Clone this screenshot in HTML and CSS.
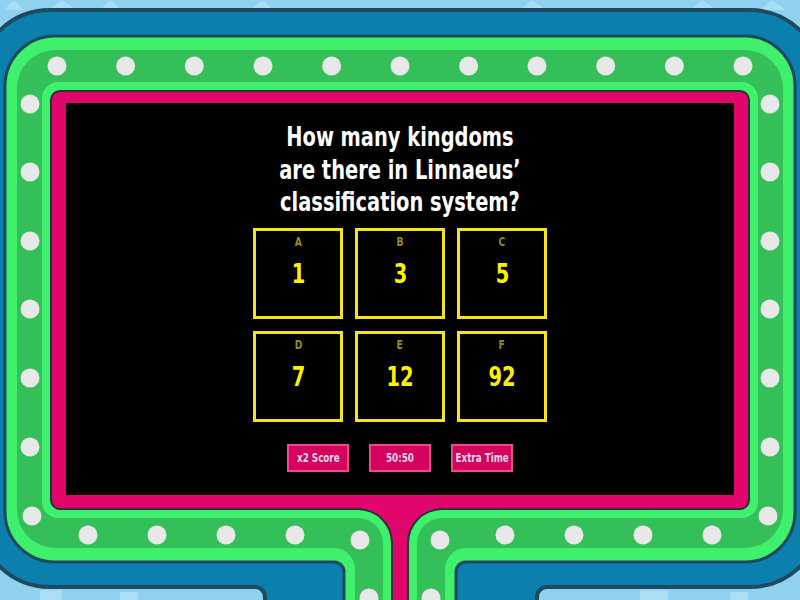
FILE: index.html
```html
<!DOCTYPE html>
<html lang="en">
<head>
<meta charset="utf-8">
<title>Gameshow Quiz</title>
<link rel="stylesheet" href="styles.css">
</head>
<body>
<div class="stage">
  <svg class="frame" width="800" height="600" viewBox="0 0 800 600" xmlns="http://www.w3.org/2000/svg" aria-hidden="true">
    <rect x="0" y="0" width="800" height="600" fill="#8fd1ef"/>
    <g fill="#a9def5">
      <polygon points="4,10 14,0 24,10"/>
      <polygon points="48,10 62,0 76,10"/>
      <polygon points="100,10 110,0 122,10"/>
      <polygon points="250,10 262,0 274,10"/>
      <polygon points="520,10 532,0 546,10"/>
      <polygon points="690,10 702,0 716,10"/>
      <polygon points="760,10 772,0 786,10"/>
      <rect x="40" y="590" width="22" height="10"/>
      <rect x="120" y="592" width="18" height="8"/>
      <rect x="640" y="590" width="28" height="10"/>
      <rect x="730" y="592" width="18" height="8"/>
    </g>
    <path d="M 50 10 H 750 A 72 72 0 0 1 822 82 V 515 A 72 72 0 0 1 750 587 H 547 A 10 10 0 0 0 537 597 V 620 H 265 V 597 A 10 10 0 0 0 255 587 H 50 A 72 72 0 0 1 -22 515 V 82 A 72 72 0 0 1 50 10 Z" fill="#0b7fae" stroke="#1d4a60" stroke-width="4"/>
    <path d="M 55 36 H 745 A 50 50 0 0 1 795 86 V 512 A 50 50 0 0 1 745 562 H 466 A 10 10 0 0 0 456 572 V 620 H 344 V 572 A 10 10 0 0 0 334 562 H 55 A 50 50 0 0 1 5 512 V 86 A 50 50 0 0 1 55 36 Z" fill="#3ef06b" stroke="#1d4a5a" stroke-width="3"/>
    <path d="M 55 50 H 745 A 38 38 0 0 1 783 88 V 510 A 38 38 0 0 1 745 548 H 466 A 21 21 0 0 0 445 569 V 620 H 355 V 569 A 21 21 0 0 0 334 548 H 55 A 38 38 0 0 1 17 510 V 88 A 38 38 0 0 1 55 50 Z" fill="#35bf58"/>
    <path d="M 58 82 H 742 A 16 16 0 0 1 758 98 V 502 A 16 16 0 0 1 742 518 H 442 A 25 25 0 0 0 417 543 V 620 H 383 V 543 A 25 25 0 0 0 358 518 H 58 A 16 16 0 0 1 42 502 V 98 A 16 16 0 0 1 58 82 Z" fill="#3ef06b"/>
    <path d="M 60 90 H 740 A 10 10 0 0 1 750 100 V 500 A 10 10 0 0 1 740 510 H 442 A 33 33 0 0 0 409 543 V 620 H 391 V 543 A 33 33 0 0 0 358 510 H 60 A 10 10 0 0 1 50 500 V 100 A 10 10 0 0 1 60 90 Z" fill="#27323c"/>
    <path d="M 60 92 H 740 A 8 8 0 0 1 748 100 V 500 A 8 8 0 0 1 740 508 H 442 A 35 35 0 0 0 407 543 V 620 H 393 V 543 A 35 35 0 0 0 358 508 H 60 A 8 8 0 0 1 52 500 V 100 A 8 8 0 0 1 60 92 Z" fill="#e0066b"/>
    <g fill="#e8e8e8">
      <circle cx="57" cy="66" r="9.5"/>
      <circle cx="125.6" cy="66" r="9.5"/>
      <circle cx="194.3" cy="66" r="9.5"/>
      <circle cx="263" cy="66" r="9.5"/>
      <circle cx="331.6" cy="66" r="9.5"/>
      <circle cx="400" cy="66" r="9.5"/>
      <circle cx="468.6" cy="66" r="9.5"/>
      <circle cx="537" cy="66" r="9.5"/>
      <circle cx="605.7" cy="66" r="9.5"/>
      <circle cx="674.4" cy="66" r="9.5"/>
      <circle cx="743" cy="66" r="9.5"/>
      <circle cx="30" cy="104" r="9.5"/>
      <circle cx="30" cy="172" r="9.5"/>
      <circle cx="30" cy="241" r="9.5"/>
      <circle cx="30" cy="309" r="9.5"/>
      <circle cx="30" cy="378" r="9.5"/>
      <circle cx="30" cy="447" r="9.5"/>
      <circle cx="32" cy="516" r="9.5"/>
      <circle cx="770" cy="104" r="9.5"/>
      <circle cx="770" cy="172" r="9.5"/>
      <circle cx="770" cy="241" r="9.5"/>
      <circle cx="770" cy="309" r="9.5"/>
      <circle cx="770" cy="378" r="9.5"/>
      <circle cx="770" cy="447" r="9.5"/>
      <circle cx="768" cy="516" r="9.5"/>
      <circle cx="88" cy="535" r="9.5"/>
      <circle cx="157" cy="535" r="9.5"/>
      <circle cx="226" cy="535" r="9.5"/>
      <circle cx="295" cy="535" r="9.5"/>
      <circle cx="360" cy="540" r="9.5"/>
      <circle cx="440" cy="540" r="9.5"/>
      <circle cx="505" cy="535" r="9.5"/>
      <circle cx="574" cy="535" r="9.5"/>
      <circle cx="643" cy="535" r="9.5"/>
      <circle cx="712" cy="535" r="9.5"/>
      <circle cx="369" cy="598" r="9.5"/>
      <circle cx="431" cy="598" r="9.5"/>
    </g>
  </svg>
  <div class="overlay">
    <main class="screen">
      <h1 class="question">How many kingdoms<br>are there in Linnaeus’<br>classification system?</h1>
      <div class="answers">
        <div class="answer"><span class="letter">A</span><span class="value">1</span></div>
        <div class="answer"><span class="letter">B</span><span class="value">3</span></div>
        <div class="answer"><span class="letter">C</span><span class="value">5</span></div>
        <div class="answer"><span class="letter">D</span><span class="value">7</span></div>
        <div class="answer"><span class="letter">E</span><span class="value">12</span></div>
        <div class="answer"><span class="letter">F</span><span class="value">92</span></div>
      </div>
      <div class="powerups">
        <button class="powerup" type="button"><span class="label">x2 Score</span></button>
        <button class="powerup" type="button"><span class="label">50:50</span></button>
        <button class="powerup" type="button"><span class="label">Extra Time</span></button>
      </div>
    </main>
  </div>
</div>
</body>
</html>
```
FILE: styles.css
```css
html, body {
  margin: 0;
  padding: 0;
}

body {
  width: 800px;
  height: 600px;
  overflow: hidden;
  background: #8fd1ef;
  font-family: "DejaVu Sans Condensed", "DejaVu Sans", sans-serif;
  font-stretch: condensed;
}

.stage {
  display: grid;
  width: 800px;
  height: 600px;
}

.frame,
.overlay {
  grid-area: 1 / 1;
}

.frame {
  display: block;
}

.overlay {
  padding: 103px 66px 105px;
}

.screen {
  background: #000;
  height: 392px;
  display: flex;
  flex-direction: column;
  align-items: center;
}

.question {
  margin: 18px 0 0;
  color: #ffffff;
  font-size: 27px;
  line-height: 32.5px;
  font-weight: 700;
  text-align: center;
  white-space: nowrap;
  transform: scaleX(0.8);
}

.answers {
  margin-top: 9px;
  display: grid;
  grid-template-columns: repeat(3, 90px);
  grid-auto-rows: 91px;
  gap: 12px;
}

.answer {
  box-sizing: border-box;
  border: 3px solid #f6e31c;
  display: flex;
  flex-direction: column;
  align-items: center;
}

.letter {
  margin-top: 4px;
  font-size: 12px;
  line-height: 14px;
  font-weight: 700;
  color: #948c18;
  transform: scaleX(0.85);
}

.value {
  margin-top: 10px;
  font-size: 27px;
  line-height: 30px;
  font-weight: 700;
  color: #fff000;
  transform: scaleX(0.8);
}

.powerups {
  margin-top: 22px;
  display: flex;
  gap: 20px;
}

.powerup {
  box-sizing: border-box;
  width: 62px;
  height: 28px;
  padding: 0;
  border: 2px solid #ee4a8a;
  background: #d4035f;
  color: #ffd6e6;
  font-family: inherit;
  font-size: 12.5px;
  font-weight: 700;
  display: flex;
  align-items: center;
  justify-content: center;
  overflow: visible;
}

.label {
  display: inline-block;
  white-space: nowrap;
  transform: scaleX(0.78);
}
```
